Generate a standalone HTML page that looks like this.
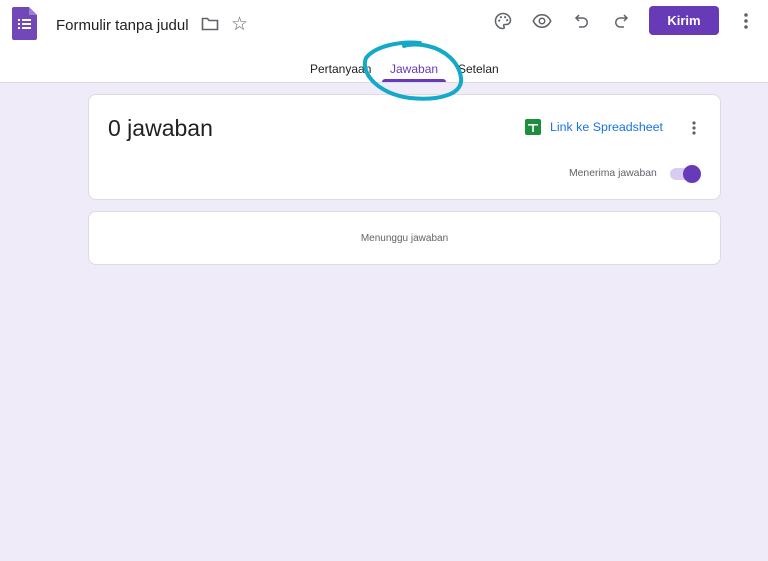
<!DOCTYPE html>
<html><head><meta charset="utf-8"><style>
*{margin:0;padding:0;box-sizing:border-box}
body{width:768px;height:561px;background:#f0ebf8;font-family:"Liberation Sans",sans-serif;position:relative;overflow:hidden}
.hdr{position:absolute;left:0;top:0;width:768px;height:83px;background:#fff;border-bottom:1px solid #dadce0}
.abs{position:absolute}
.card{position:absolute;background:#fff;border:1px solid #dadce0;border-radius:8px}
</style></head><body>
<div class="hdr">
 <svg class="abs" style="left:12px;top:7px" width="25" height="33" viewBox="0 0 25 33"><path d="M2 0h15l8 8v23a2 2 0 0 1-2 2H2a2 2 0 0 1-2-2V2a2 2 0 0 1 2-2z" fill="#7248b9"/><path d="M17 0v8h8z" fill="#9c7dd1"/><g fill="#fff"><rect x="6" y="12" width="2" height="2"/><rect x="10" y="12" width="9" height="2"/><rect x="6" y="16" width="2" height="2"/><rect x="10" y="16" width="9" height="2"/><rect x="6" y="20" width="2" height="2"/><rect x="10" y="20" width="9" height="2"/></g></svg>
 <div class="abs" style="left:56px;top:17px;font-size:15px;color:#202124">Formulir tanpa judul</div>
 <svg class="abs" style="left:201px;top:16px" width="18" height="16" viewBox="0 0 18 16"><path d="M1.5 2.5h5l1.5 2h8.5v9h-15z" fill="none" stroke="#5f6368" stroke-width="1.6"/></svg>
 <div class="abs" style="left:231px;top:13px;font-size:19px;color:#5f6368">☆</div>
 <svg class="abs" style="left:493px;top:11px" width="20" height="20" viewBox="0 0 24 24"><path d="M12 3a9 9 0 0 0 0 18c1 0 1.5-.7 1.5-1.4 0-.9-.8-1.2-.8-2 0-.8.6-1.4 1.4-1.4H16a5 5 0 0 0 5-5c0-4.5-4-8.2-9-8.2z" fill="none" stroke="#5f6368" stroke-width="1.8"/><circle cx="7.5" cy="11.5" r="1.3" fill="#5f6368"/><circle cx="9.5" cy="7.5" r="1.3" fill="#5f6368"/><circle cx="14.5" cy="7.5" r="1.3" fill="#5f6368"/><circle cx="17" cy="11" r="1.3" fill="#5f6368"/></svg>
 <svg class="abs" style="left:532px;top:11px" width="20" height="20" viewBox="0 0 24 24"><path d="M1.5 12C4 7 8 4.5 12 4.5S20 7 22.5 12C20 17 16 19.5 12 19.5S4 17 1.5 12z" fill="none" stroke="#5f6368" stroke-width="1.8"/><circle cx="12" cy="12" r="3.3" fill="none" stroke="#5f6368" stroke-width="1.8"/></svg>
 <svg class="abs" style="left:573px;top:12px" width="18" height="18" viewBox="0 0 24 24"><path d="M8 4L4 8l4 4M4 8h9a6 6 0 0 1 0 12H8" fill="none" stroke="#5f6368" stroke-width="2"/></svg>
 <svg class="abs" style="left:612px;top:12px" width="18" height="18" viewBox="0 0 24 24"><path d="M16 4l4 4-4 4M20 8h-9a6 6 0 0 0 0 12h5" fill="none" stroke="#5f6368" stroke-width="2"/></svg>
 <div class="abs" style="left:649px;top:6px;width:70px;height:29px;background:#673ab7;border-radius:4px;color:#fff;font-size:13px;font-weight:bold;text-align:center;line-height:29px">Kirim</div>
 <svg class="abs" style="left:742px;top:12px" width="8" height="18"><circle cx="4" cy="3" r="1.8" fill="#5f6368"/><circle cx="4" cy="9" r="1.8" fill="#5f6368"/><circle cx="4" cy="15" r="1.8" fill="#5f6368"/></svg>
 <div class="abs" style="left:310px;top:62px;font-size:12px;color:#202124">Pertanyaan</div>
 <div class="abs" style="left:390px;top:62px;font-size:12px;color:#673ab7">Jawaban</div>
 <div class="abs" style="left:382px;top:79px;width:64px;height:3px;background:#673ab7;border-radius:3px 3px 0 0"></div>
 <div class="abs" style="left:458px;top:62px;font-size:12px;color:#202124">Setelan</div>
</div>
<div class="card" style="left:88px;top:94px;width:633px;height:106px">
 <div class="abs" style="left:19px;top:20px;font-size:23px;color:#202124">0 jawaban</div>
 <svg class="abs" style="left:436px;top:24px" width="16" height="16"><rect width="16" height="16" rx="2" fill="#1e8e3e"/><rect x="3" y="5" width="10" height="1.6" fill="#fff"/><rect x="7.2" y="5" width="1.6" height="8" fill="#fff"/></svg>
 <div class="abs" style="left:461px;top:25px;font-size:12.4px;color:#1a73e8">Link ke Spreadsheet</div>
 <svg class="abs" style="left:601px;top:25px" width="8" height="16"><circle cx="4" cy="3" r="1.6" fill="#5f6368"/><circle cx="4" cy="8" r="1.6" fill="#5f6368"/><circle cx="4" cy="13" r="1.6" fill="#5f6368"/></svg>
 <div class="abs" style="left:480px;top:73px;font-size:10.4px;color:#5f6368">Menerima jawaban</div>
 <div class="abs" style="left:581px;top:73px;width:30px;height:12px;border-radius:6px;background:#d8cdee"></div>
 <div class="abs" style="left:594px;top:70px;width:18px;height:18px;border-radius:50%;background:#673ab7"></div>
</div>
<div class="card" style="left:88px;top:211px;width:633px;height:54px">
 <div style="text-align:center;font-size:10px;color:#5f6368;margin-top:21px">Menunggu jawaban</div>
</div>
<svg class="abs" style="left:360px;top:38px;z-index:5" width="108" height="66" viewBox="0 0 108 66"><path d="M60 5C40 3 15 8 6 20C0 35 18 56 50 60C80 63 103 56 101 40C99 24 85 12 68 8C60 6 50 6 44 8" fill="none" stroke="#14a9c9" stroke-width="4" stroke-linecap="round"/></svg>
</body></html>
